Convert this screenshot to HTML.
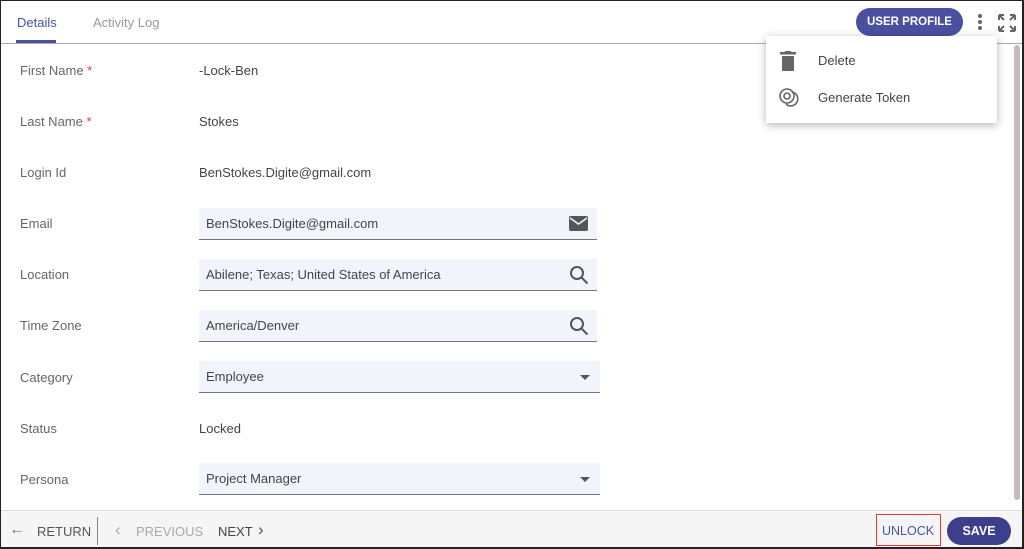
<!DOCTYPE html>
<html><head><style>
*{box-sizing:border-box;margin:0;padding:0}
body{width:1024px;height:549px;overflow:hidden;background:#fff;font-family:"Liberation Sans",sans-serif;font-size:13px;color:#444;position:relative}
.frame{position:absolute;left:0;top:0;width:1024px;height:549px;border:1px solid #222;border-right:2px solid #222;border-bottom:2px solid #222}
.abs{position:absolute}
.lbl{position:absolute;left:20px;color:#666;font-size:13px}
.val{position:absolute;left:199px;color:#444}
.inp{position:absolute;left:199px;width:398px;height:32px;background:#f2f4fc;border-bottom:1px solid #777;padding-left:7px;line-height:31px;color:#444}
.req{color:#e53935}
</style></head><body>
<div class="abs" style="left:17px;top:15px;color:#4a52a0;font-size:13px">Details</div>
<div class="abs" style="left:16px;top:40px;width:40px;height:3px;background:#4a52a0"></div>
<div class="abs" style="left:93px;top:15px;color:#999">Activity Log</div>
<div class="abs" style="left:0;top:43px;width:1024px;height:1px;background:#aaa"></div>
<div class="abs" style="left:856px;top:8px;width:107px;height:28px;border-radius:14px;background:#4a4fa0;color:#fff;font-weight:bold;font-size:11.5px;text-align:center;line-height:28px">USER PROFILE</div>
<svg class="abs" style="left:975px;top:12px" width="10" height="22"><circle cx="5" cy="4" r="2" fill="#666"/><circle cx="5" cy="10" r="2" fill="#666"/><circle cx="5" cy="16" r="2" fill="#666"/></svg>
<svg class="abs" style="left:997px;top:13px" width="20" height="20" fill="none" stroke="#666" stroke-width="2"><path d="M2 2l5 5M2 2h5M2 2v5M18 2l-5 5M18 2h-5M18 2v5M2 18l5-5M2 18h5M2 18v-5M18 18l-5-5M18 18h-5M18 18v-5"/></svg>
<div class="abs" style="left:1014px;top:45px;width:6px;height:455px;background:#c4bcbc;border-radius:3px"></div>

<div class="lbl" style="top:63px">First Name <span class="req">*</span></div><div class="val" style="top:63px">-Lock-Ben</div>
<div class="lbl" style="top:114px">Last Name <span class="req">*</span></div><div class="val" style="top:114px">Stokes</div>
<div class="lbl" style="top:165px">Login Id</div><div class="val" style="top:165px">BenStokes.Digite@gmail.com</div>
<div class="lbl" style="top:216px">Email</div><div class="inp" style="top:208px">BenStokes.Digite@gmail.com</div>
<svg class="abs" style="left:569px;top:216px" width="20" height="15"><rect x="0" y="0" width="19" height="15" rx="2" fill="#555"/><path d="M1 2l8.5 6 8.5-6" stroke="#f2f4fc" stroke-width="1.6" fill="none"/></svg>
<div class="lbl" style="top:267px">Location</div><div class="inp" style="top:259px">Abilene; Texas; United States of America</div>
<svg class="abs" style="left:569px;top:265px" width="20" height="20" fill="none" stroke="#555" stroke-width="2"><circle cx="8" cy="8" r="6"/><path d="M12.5 12.5l6 6"/></svg>
<div class="lbl" style="top:318px">Time Zone</div><div class="inp" style="top:310px">America/Denver</div>
<svg class="abs" style="left:569px;top:316px" width="20" height="20" fill="none" stroke="#555" stroke-width="2"><circle cx="8" cy="8" r="6"/><path d="M12.5 12.5l6 6"/></svg>
<div class="lbl" style="top:370px">Category</div><div class="inp" style="top:361px;width:401px">Employee</div>
<svg class="abs" style="left:580px;top:375px" width="10" height="6"><path d="M0 0h10L5 5z" fill="#555"/></svg>
<div class="lbl" style="top:421px">Status</div><div class="val" style="top:421px">Locked</div>
<div class="lbl" style="top:472px">Persona</div><div class="inp" style="top:463px;width:401px">Project Manager</div>
<svg class="abs" style="left:580px;top:477px" width="10" height="6"><path d="M0 0h10L5 5z" fill="#555"/></svg>

<div class="abs" style="left:766px;top:36px;width:231px;height:87px;background:#fff;box-shadow:0 2px 8px rgba(0,0,0,.3)"></div>
<svg class="abs" style="left:780px;top:51px" width="16" height="20"><rect x="0" y="1" width="16" height="2.5" fill="#666"/><rect x="5" y="0" width="6" height="2" fill="#666"/><rect x="2" y="5" width="12" height="15" fill="#666"/></svg>
<div class="abs" style="left:818px;top:53px;color:#444">Delete</div>
<svg class="abs" style="left:779px;top:87px" width="22" height="20" fill="none" stroke="#666" stroke-width="1.6"><circle cx="8" cy="9" r="7"/><circle cx="8" cy="9" r="3"/><path d="M13 5a7 7 0 1 1-6 12"/></svg>
<div class="abs" style="left:818px;top:90px;color:#444">Generate Token</div>

<div class="abs" style="left:0;top:510px;width:1024px;height:39px;background:#f5f5f5;border-top:1px solid #ddd"></div>
<div class="abs" style="left:9px;top:521px;color:#777;font-size:16px">←</div>
<div class="abs" style="left:37px;top:524px;color:#555">RETURN</div>
<div class="abs" style="left:97px;top:517px;width:1px;height:28px;background:#888"></div>
<div class="abs" style="left:115px;top:520px;color:#aaa;font-size:17px">‹</div>
<div class="abs" style="left:136px;top:524px;color:#aaa">PREVIOUS</div>
<div class="abs" style="left:218px;top:524px;color:#444">NEXT</div>
<div class="abs" style="left:258px;top:520px;color:#555;font-size:17px">›</div>
<div class="abs" style="left:876px;top:514px;width:65px;height:32px;border:1.5px solid #e53935"></div>
<div class="abs" style="left:882px;top:524px;color:#4a52a0;font-size:12.5px">UNLOCK</div>
<div class="abs" style="left:947px;top:517px;width:64px;height:28px;border-radius:14px;background:#3b3f8c;color:#fff;font-weight:bold;font-size:12.5px;text-align:center;line-height:28px">SAVE</div>
<div class="frame"></div>
</body></html>
